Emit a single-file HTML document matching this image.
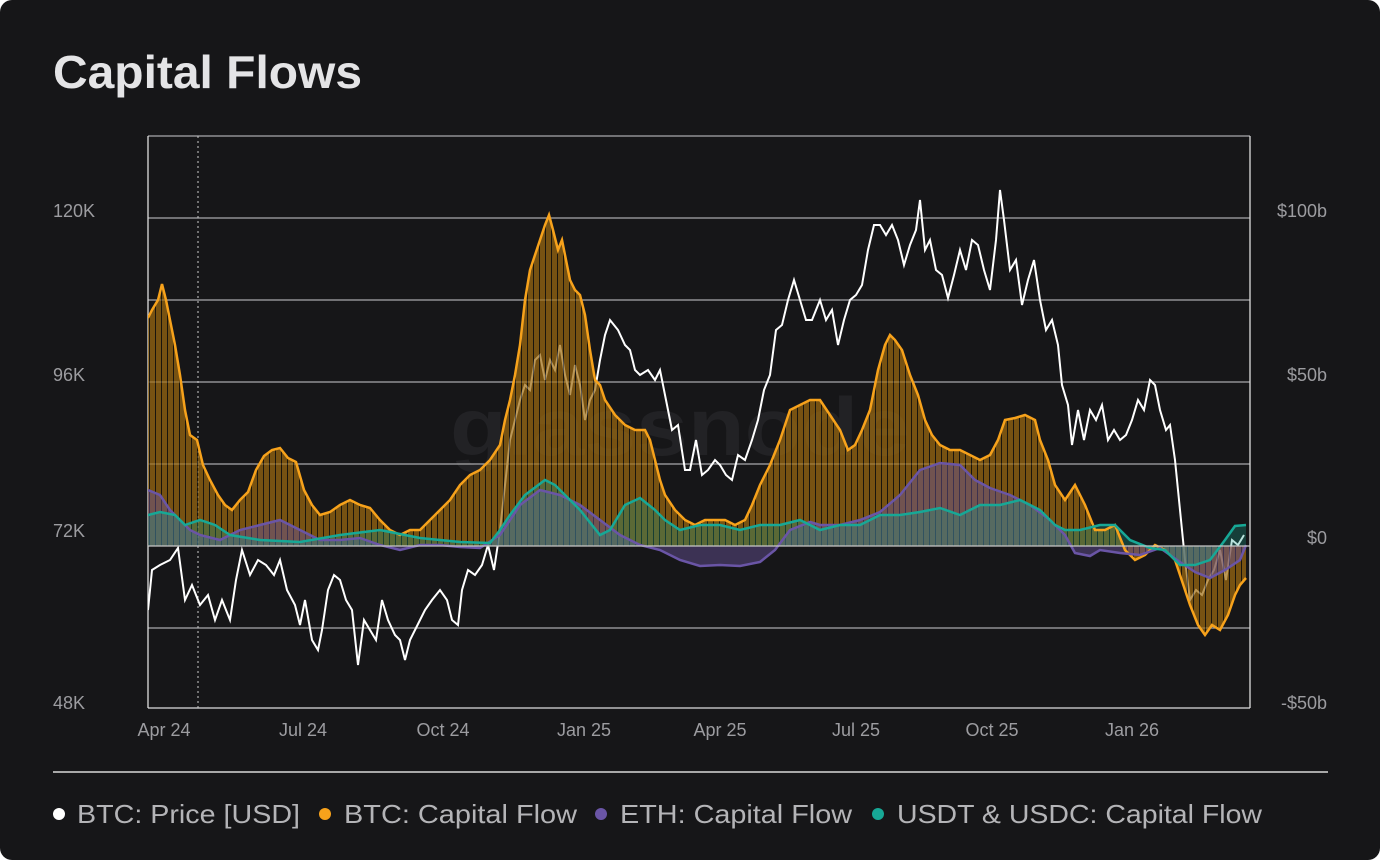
<!DOCTYPE html>
<html><head><meta charset="utf-8"><style>
html,body{margin:0;padding:0;background:#fff;}
body{width:1380px;height:860px;overflow:hidden;}
.card{position:absolute;left:0;top:0;width:1380px;height:860px;background:#161618;border-radius:12px;}
svg{position:absolute;left:0;top:0;}
</style></head><body>
<div class="card"></div>
<svg width="1380" height="860" viewBox="0 0 1380 860" font-family="Liberation Sans, sans-serif">
<defs>
<pattern id="hatch" width="6" height="10" patternUnits="userSpaceOnUse">
<rect width="6" height="10" fill="#a06c10"/>
<rect x="5" width="1.2" height="10" fill="#1a1408"/>
</pattern>
<clipPath id="plot"><rect x="148" y="136" width="1100" height="572"/></clipPath>
</defs>
<text x="53" y="88" font-size="46" font-weight="bold" fill="#e4e4e6" textLength="309" lengthAdjust="spacingAndGlyphs">Capital Flows</text>
<text x="450" y="455" font-size="82" font-weight="bold" fill="#222225" textLength="460" lengthAdjust="spacingAndGlyphs">glassnode</text>
<g stroke="#a8a8aa" stroke-width="1.3">
<line x1="148" y1="136" x2="1250" y2="136"/>
<line x1="148" y1="218" x2="1250" y2="218"/>
<line x1="148" y1="300" x2="1250" y2="300"/>
<line x1="148" y1="382" x2="1250" y2="382"/>
<line x1="148" y1="464" x2="1250" y2="464"/>
<line x1="148" y1="628" x2="1250" y2="628"/>
<line x1="148" y1="708" x2="1250" y2="708" stroke="#ddd"/>
<line x1="148" y1="136" x2="148" y2="708" stroke="#ddd"/>
<line x1="1250" y1="136" x2="1250" y2="708" stroke="#ddd"/>
</g>
<line x1="198" y1="136" x2="198" y2="708" stroke="#ccc" stroke-dasharray="2,3"/>
<g clip-path="url(#plot)">
<polyline fill="none" stroke="#fff" stroke-width="2" points="148,610 152,570 160,565 170,560 178,548 185,600 192,585 200,605 208,595 215,620 222,600 230,620 236,580 242,550 250,575 258,560 266,565 274,575 280,560 287,590 295,605 300,625 305,600 312,640 318,650 322,630 328,590 334,575 340,580 346,600 352,610 358,665 364,620 370,630 376,640 382,600 388,620 395,635 400,640 405,660 410,640 415,630 425,610 432,600 440,590 447,600 452,620 458,625 462,590 468,570 475,575 482,565 488,545 494,570 500,530 505,485 510,440 515,420 520,400 525,385 530,390 535,360 540,355 545,380 550,360 555,370 560,345 565,375 570,395 575,365 580,385 585,420 590,400 595,390 600,360 605,335 610,320 618,330 625,345 630,350 635,370 640,375 648,370 655,380 660,370 666,400 672,430 678,425 685,470 690,470 696,440 702,475 708,470 715,460 720,465 726,475 732,480 738,455 745,460 752,440 758,420 764,390 770,375 776,330 782,325 788,300 794,280 800,300 806,320 812,320 820,300 826,320 832,310 838,345 844,320 850,300 856,295 862,285 868,250 874,225 880,225 886,235 892,225 898,240 904,265 910,245 916,230 920,200 925,250 930,240 936,270 942,275 948,298 954,275 960,250 966,270 972,240 978,245 984,270 990,290 996,240 1000,190 1004,220 1010,270 1016,260 1022,305 1028,280 1034,260 1040,300 1046,330 1052,320 1058,345 1062,385 1068,405 1072,445 1078,410 1084,440 1090,410 1096,420 1102,405 1108,440 1114,430 1120,440 1126,435 1132,420 1138,400 1144,410 1150,380 1155,385 1160,410 1166,430 1170,425 1175,460 1180,510 1185,560 1190,600 1196,590 1202,595 1208,580 1214,570 1220,550 1226,580 1232,540 1238,545 1244,535"/>
<polygon fill="url(#hatch)" fill-opacity="0.7" points="148,546 148,318 152,310 158,300 162,284 166,300 170,320 175,345 180,375 185,410 190,435 197,440 203,465 210,480 218,495 225,505 232,510 240,500 248,492 256,470 264,456 272,450 280,448 288,458 296,462 304,490 312,505 320,515 330,512 340,505 350,500 360,505 370,508 380,520 390,530 400,535 410,530 420,530 430,520 440,510 450,500 460,485 470,475 480,470 490,460 500,445 505,420 510,400 515,375 520,345 525,300 530,270 535,255 540,240 545,225 549,215 553,230 558,250 562,240 566,260 570,280 575,290 580,295 585,315 590,350 595,380 600,385 605,400 615,415 625,425 635,430 645,430 650,440 655,460 660,480 665,495 675,510 685,520 695,525 705,520 715,520 725,520 735,525 745,520 752,505 760,485 770,465 780,440 790,410 800,405 810,400 820,400 830,415 840,430 848,450 855,445 862,430 870,410 878,370 885,345 890,335 895,340 902,350 910,375 918,395 925,420 932,435 940,445 950,450 960,450 970,455 980,460 990,455 998,440 1005,420 1015,418 1025,415 1035,420 1040,440 1048,460 1055,485 1065,500 1075,485 1085,505 1095,530 1105,530 1115,525 1125,550 1135,560 1145,555 1155,545 1165,550 1175,560 1185,590 1190,605 1198,625 1205,635 1212,625 1220,630 1228,615 1235,595 1240,585 1246,578 1246,546"/>
<polygon fill="#6a559e" fill-opacity="0.45" points="148,546 148,490 160,495 170,510 180,520 190,530 200,535 220,540 240,530 260,525 280,520 300,530 320,540 340,540 360,538 380,545 400,550 420,545 440,545 460,547 480,548 500,535 520,505 540,490 560,495 580,505 600,520 620,535 640,545 660,550 680,560 700,566 720,565 740,566 760,562 775,550 790,530 810,522 820,525 840,525 860,520 880,512 900,495 920,470 940,463 960,465 975,480 990,488 1010,495 1030,505 1050,520 1065,535 1075,553 1090,556 1100,550 1120,553 1140,555 1160,548 1180,562 1195,572 1210,578 1225,570 1240,560 1246,545 1246,546"/>
<polygon fill="#17a08c" fill-opacity="0.3" points="148,546 148,515 160,512 175,515 185,525 200,520 215,525 230,535 260,540 300,542 340,535 380,530 420,538 460,542 490,543 500,530 510,515 525,495 545,480 555,485 565,495 580,510 600,535 610,530 625,505 640,498 655,510 665,520 680,530 700,525 720,525 740,530 760,525 780,525 800,520 820,530 840,525 860,525 880,515 900,515 920,512 940,508 960,515 980,505 1000,505 1020,500 1040,510 1055,525 1065,530 1080,530 1100,525 1115,525 1130,540 1150,548 1165,550 1180,565 1195,565 1210,560 1225,540 1235,526 1246,525 1246,546"/>
<polyline fill="none" stroke="#f7a21b" stroke-width="2.5" points="148,318 152,310 158,300 162,284 166,300 170,320 175,345 180,375 185,410 190,435 197,440 203,465 210,480 218,495 225,505 232,510 240,500 248,492 256,470 264,456 272,450 280,448 288,458 296,462 304,490 312,505 320,515 330,512 340,505 350,500 360,505 370,508 380,520 390,530 400,535 410,530 420,530 430,520 440,510 450,500 460,485 470,475 480,470 490,460 500,445 505,420 510,400 515,375 520,345 525,300 530,270 535,255 540,240 545,225 549,215 553,230 558,250 562,240 566,260 570,280 575,290 580,295 585,315 590,350 595,380 600,385 605,400 615,415 625,425 635,430 645,430 650,440 655,460 660,480 665,495 675,510 685,520 695,525 705,520 715,520 725,520 735,525 745,520 752,505 760,485 770,465 780,440 790,410 800,405 810,400 820,400 830,415 840,430 848,450 855,445 862,430 870,410 878,370 885,345 890,335 895,340 902,350 910,375 918,395 925,420 932,435 940,445 950,450 960,450 970,455 980,460 990,455 998,440 1005,420 1015,418 1025,415 1035,420 1040,440 1048,460 1055,485 1065,500 1075,485 1085,505 1095,530 1105,530 1115,525 1125,550 1135,560 1145,555 1155,545 1165,550 1175,560 1185,590 1190,605 1198,625 1205,635 1212,625 1220,630 1228,615 1235,595 1240,585 1246,578"/>
<polyline fill="none" stroke="#6a55a6" stroke-width="2.5" points="148,490 160,495 170,510 180,520 190,530 200,535 220,540 240,530 260,525 280,520 300,530 320,540 340,540 360,538 380,545 400,550 420,545 440,545 460,547 480,548 500,535 520,505 540,490 560,495 580,505 600,520 620,535 640,545 660,550 680,560 700,566 720,565 740,566 760,562 775,550 790,530 810,522 820,525 840,525 860,520 880,512 900,495 920,470 940,463 960,465 975,480 990,488 1010,495 1030,505 1050,520 1065,535 1075,553 1090,556 1100,550 1120,553 1140,555 1160,548 1180,562 1195,572 1210,578 1225,570 1240,560 1246,545"/>
<polyline fill="none" stroke="#17a896" stroke-width="2.5" points="148,515 160,512 175,515 185,525 200,520 215,525 230,535 260,540 300,542 340,535 380,530 420,538 460,542 490,543 500,530 510,515 525,495 545,480 555,485 565,495 580,510 600,535 610,530 625,505 640,498 655,510 665,520 680,530 700,525 720,525 740,530 760,525 780,525 800,520 820,530 840,525 860,525 880,515 900,515 920,512 940,508 960,515 980,505 1000,505 1020,500 1040,510 1055,525 1065,530 1080,530 1100,525 1115,525 1130,540 1150,548 1165,550 1180,565 1195,565 1210,560 1225,540 1235,526 1246,525"/>
</g>
<line x1="148" y1="546" x2="1250" y2="546" stroke="#c8c8c8" stroke-width="1.3"/>
<g font-size="18" fill="#9c9ca0">
<text x="53" y="217">120K</text>
<text x="53" y="381">96K</text>
<text x="53" y="537">72K</text>
<text x="53" y="709">48K</text>
<text x="1327" y="217" text-anchor="end">$100b</text>
<text x="1327" y="381" text-anchor="end">$50b</text>
<text x="1327" y="544" text-anchor="end">$0</text>
<text x="1327" y="709" text-anchor="end">-$50b</text>
<g text-anchor="middle">
<text x="164" y="736">Apr 24</text>
<text x="303" y="736">Jul 24</text>
<text x="443" y="736">Oct 24</text>
<text x="584" y="736">Jan 25</text>
<text x="720" y="736">Apr 25</text>
<text x="856" y="736">Jul 25</text>
<text x="992" y="736">Oct 25</text>
<text x="1132" y="736">Jan 26</text>
</g>
</g>
<line x1="53" y1="772" x2="1328" y2="772" stroke="#d8d8d8" stroke-width="1.5"/>
<g font-size="26" fill="#b4b4b7">
<circle cx="59" cy="814" r="6" fill="#fff"/><text x="77" y="823" textLength="223" lengthAdjust="spacingAndGlyphs">BTC: Price [USD]</text>
<circle cx="325" cy="814" r="6" fill="#f7a21b"/><text x="344" y="823" textLength="233" lengthAdjust="spacingAndGlyphs">BTC: Capital Flow</text>
<circle cx="601" cy="814" r="6" fill="#6a55a6"/><text x="620" y="823" textLength="232" lengthAdjust="spacingAndGlyphs">ETH: Capital Flow</text>
<circle cx="878" cy="814" r="6" fill="#17a896"/><text x="897" y="823" textLength="365" lengthAdjust="spacingAndGlyphs">USDT &amp; USDC: Capital Flow</text>
</g>
</svg>
</body></html>
